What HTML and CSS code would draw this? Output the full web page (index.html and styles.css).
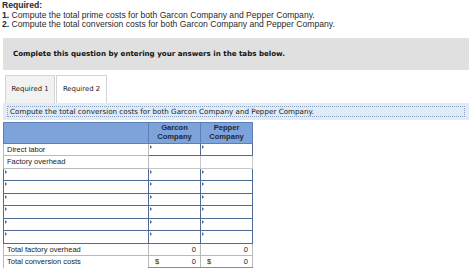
FILE: index.html
```html
<!DOCTYPE html>
<html lang="en">
  <head>
    <meta charset="UTF-8" />
    <meta name="viewport" content="width=device-width, initial-scale=1.0" />
    <title>Conversion Costs</title>
    <link rel="stylesheet" href="styles.css">
  </head>
  <body>
    <div class="required">
      <div class="required-title">Required:</div>
      <div><b>1.</b> Compute the total prime costs for both Garcon Company and Pepper Company.</div>
      <div><b>2.</b> Compute the total conversion costs for both Garcon Company and Pepper Company.</div>
    </div>

    <div class="notice">Complete this question by entering your answers in the tabs below.</div>

    <div class="tabs">
      <div class="tab">Required 1</div>
      <div class="tab active">Required 2</div>
    </div>

    <div class="prompt">
      <div class="prompt-text">Compute the total conversion costs for both Garcon Company and Pepper Company.</div>
    </div>

    <table class="sheet">
      <colgroup>
        <col class="col-label">
        <col class="col-num">
        <col class="col-num">
      </colgroup>
      <thead>
        <tr>
          <th></th>
          <th>Garcon<br>Company</th>
          <th>Pepper<br>Company</th>
        </tr>
      </thead>
      <tbody>
        <tr>
          <td class="label">Direct labor</td>
          <td class="input"></td>
          <td class="input"></td>
        </tr>
        <tr>
          <td class="label">Factory overhead</td>
          <td class="plain"></td>
          <td class="plain"></td>
        </tr>
        <tr class="entry">
          <td class="input"></td>
          <td class="input"></td>
          <td class="input"></td>
        </tr>
        <tr class="entry">
          <td class="input"></td>
          <td class="input"></td>
          <td class="input"></td>
        </tr>
        <tr class="entry">
          <td class="input"></td>
          <td class="input"></td>
          <td class="input"></td>
        </tr>
        <tr class="entry">
          <td class="input"></td>
          <td class="input"></td>
          <td class="input"></td>
        </tr>
        <tr class="entry">
          <td class="input"></td>
          <td class="input"></td>
          <td class="input"></td>
        </tr>
        <tr class="entry">
          <td class="input"></td>
          <td class="input"></td>
          <td class="input"></td>
        </tr>
        <tr>
          <td class="label">Total factory overhead</td>
          <td class="total">0</td>
          <td class="total">0</td>
        </tr>
        <tr class="grand">
          <td class="label">Total conversion costs</td>
          <td class="total"><span class="cur">$</span>0</td>
          <td class="total"><span class="cur">$</span>0</td>
        </tr>
      </tbody>
    </table>
  </body>
</html>
```

FILE: styles.css
```css
html,
body {
  padding: 0;
  margin: 0;
}
body {
  background: #fff;
  color: #222;
  font-family: "Liberation Sans", Arial, sans-serif;
}

.required {
  padding: 1px 0 0 2px;
  font-size: 8.6px;
  line-height: 9.5px;
  color: #2a2a2a;
}
.required-title {
  font-weight: bold;
}

.notice {
  margin: 8px 0 0 3px;
  width: 456px;
  height: 32px;
  padding-left: 10px;
  background: #e0e0e0;
  font-family: "DejaVu Sans", Verdana, sans-serif;
  font-weight: bold;
  font-size: 7.1px;
  line-height: 32px;
  color: #111;
}

.tabs {
  display: flex;
  gap: 1px;
  margin: 5px 0 0 5px;
  height: 28px;
}
.tab {
  width: 48px;
  border: 1px solid #d4d4d4;
  border-bottom: none;
  background: #f2f2f2;
  font-family: "DejaVu Sans", Verdana, sans-serif;
  font-size: 6.9px;
  line-height: 27px;
  text-align: center;
  color: #222;
}
.tab.active {
  width: 49px;
  background: #fff;
}

.prompt {
  margin-left: 3px;
  width: 458px;
  padding: 3px 4px;
  background: #dfebf8;
}
.prompt-text {
  border: 1px dotted #8aa0bd;
  padding: 0 4px 0 2px;
  font-family: "DejaVu Sans", Verdana, sans-serif;
  font-size: 7.2px;
  line-height: 9px;
  color: #1a1a1a;
}

.sheet {
  margin: 2px 0 0 3px;
  border-collapse: collapse;
  table-layout: fixed;
  width: 248px;
  font-size: 7.5px;
}
.col-label {
  width: 145px;
}
.col-num {
  width: 52px;
}
.sheet th {
  height: 20px;
  padding: 0;
  background: #7ea3da;
  border: 1px solid #5d80b4;
  font-weight: bold;
  font-size: 7.6px;
  line-height: 8.4px;
  color: #1d2a3d;
  text-align: center;
}
.sheet tbody tr {
  height: 12.5px;
}
.sheet td {
  height: 10px;
  padding: 0 3px;
  border: 1px solid #b9b9b9;
  line-height: 9px;
  white-space: nowrap;
  position: relative;
}
.sheet td.label {
  color: #222;
}
.sheet td.input {
  border: 1px solid #4f6b94;
}
.sheet tr.entry td {
  border-width: 1.5px;
}
/* small marker in the corner of every entry cell */
.sheet td.input::before {
  content: "";
  position: absolute;
  top: 1px;
  left: 1px;
  border-top: 2px solid transparent;
  border-bottom: 2px solid transparent;
  border-left: 2px solid #4f6b94;
}
.sheet td.total {
  text-align: right;
  padding-right: 4px;
}
.sheet td.plain {
  border-color: #c8c8c8;
}
.cur {
  float: left;
  padding-left: 3px;
}
.grand td.total {
  border-bottom: 2px solid #8c8c8c;
}
```
